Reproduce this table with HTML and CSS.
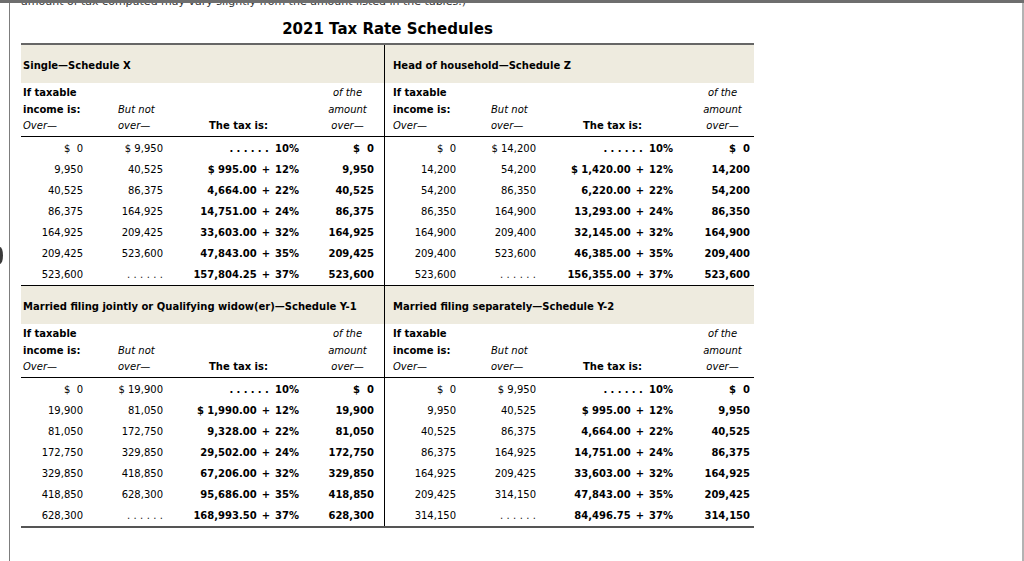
FILE: index.html
```html
<!DOCTYPE html>
<html lang="en">
<head>
<meta charset="utf-8">
<title>2021 Tax Rate Schedules</title>
<link rel="stylesheet" href="styles.css">
</head>
<body>
<div class="topbar"></div>
<div class="main">
  <div class="gutter"><div class="paren"></div></div>
  <div class="frame">
    <div class="cut"><p>amount of tax computed may vary slightly from the amount listed in the tables.)</p></div>
    <div class="content">
      <h1 class="title">2021 Tax Rate Schedules</h1>
      <div class="schedules">

        <section class="panel left upper">
          <div class="band">Single—Schedule X</div>
          <div class="colhead">
            <span class="c1 b">If taxable</span><span class="c2"></span><span class="c3"></span><span class="c4 i">of the</span>
            <span class="c1 b">income is:</span><span class="c2 i">But not</span><span class="c3"></span><span class="c4 i">amount</span>
            <span class="c1 i">Over—</span><span class="c2 i">over—</span><span class="c3 b">The tax is:</span><span class="c4 i">over—</span>
          </div>
          <div class="rows">
            <span>$&nbsp;&nbsp;0</span><span>$ 9,950</span><span class="tax"><span class="lead">......</span>10%</span><span class="ov">$&nbsp;&nbsp;0</span>
            <span>9,950</span><span>40,525</span><span class="tax">$ 995.00<span class="op">+</span>12%</span><span class="ov">9,950</span>
            <span>40,525</span><span>86,375</span><span class="tax">4,664.00<span class="op">+</span>22%</span><span class="ov">40,525</span>
            <span>86,375</span><span>164,925</span><span class="tax">14,751.00<span class="op">+</span>24%</span><span class="ov">86,375</span>
            <span>164,925</span><span>209,425</span><span class="tax">33,603.00<span class="op">+</span>32%</span><span class="ov">164,925</span>
            <span>209,425</span><span>523,600</span><span class="tax">47,843.00<span class="op">+</span>35%</span><span class="ov">209,425</span>
            <span>523,600</span><span><span class="dots">......</span></span><span class="tax">157,804.25<span class="op">+</span>37%</span><span class="ov">523,600</span>
          </div>
        </section>

        <section class="panel right upper">
          <div class="band">Head of household—Schedule Z</div>
          <div class="colhead">
            <span class="c1 b">If taxable</span><span class="c2"></span><span class="c3"></span><span class="c4 i">of the</span>
            <span class="c1 b">income is:</span><span class="c2 i">But not</span><span class="c3"></span><span class="c4 i">amount</span>
            <span class="c1 i">Over—</span><span class="c2 i">over—</span><span class="c3 b">The tax is:</span><span class="c4 i">over—</span>
          </div>
          <div class="rows">
            <span>$&nbsp;&nbsp;0</span><span>$ 14,200</span><span class="tax"><span class="lead">......</span>10%</span><span class="ov">$&nbsp;&nbsp;0</span>
            <span>14,200</span><span>54,200</span><span class="tax">$ 1,420.00<span class="op">+</span>12%</span><span class="ov">14,200</span>
            <span>54,200</span><span>86,350</span><span class="tax">6,220.00<span class="op">+</span>22%</span><span class="ov">54,200</span>
            <span>86,350</span><span>164,900</span><span class="tax">13,293.00<span class="op">+</span>24%</span><span class="ov">86,350</span>
            <span>164,900</span><span>209,400</span><span class="tax">32,145.00<span class="op">+</span>32%</span><span class="ov">164,900</span>
            <span>209,400</span><span>523,600</span><span class="tax">46,385.00<span class="op">+</span>35%</span><span class="ov">209,400</span>
            <span>523,600</span><span><span class="dots">......</span></span><span class="tax">156,355.00<span class="op">+</span>37%</span><span class="ov">523,600</span>
          </div>
        </section>

        <section class="panel left">
          <div class="band">Married filing jointly or Qualifying widow(er)—Schedule Y-1</div>
          <div class="colhead">
            <span class="c1 b">If taxable</span><span class="c2"></span><span class="c3"></span><span class="c4 i">of the</span>
            <span class="c1 b">income is:</span><span class="c2 i">But not</span><span class="c3"></span><span class="c4 i">amount</span>
            <span class="c1 i">Over—</span><span class="c2 i">over—</span><span class="c3 b">The tax is:</span><span class="c4 i">over—</span>
          </div>
          <div class="rows">
            <span>$&nbsp;&nbsp;0</span><span>$ 19,900</span><span class="tax"><span class="lead">......</span>10%</span><span class="ov">$&nbsp;&nbsp;0</span>
            <span>19,900</span><span>81,050</span><span class="tax">$ 1,990.00<span class="op">+</span>12%</span><span class="ov">19,900</span>
            <span>81,050</span><span>172,750</span><span class="tax">9,328.00<span class="op">+</span>22%</span><span class="ov">81,050</span>
            <span>172,750</span><span>329,850</span><span class="tax">29,502.00<span class="op">+</span>24%</span><span class="ov">172,750</span>
            <span>329,850</span><span>418,850</span><span class="tax">67,206.00<span class="op">+</span>32%</span><span class="ov">329,850</span>
            <span>418,850</span><span>628,300</span><span class="tax">95,686.00<span class="op">+</span>35%</span><span class="ov">418,850</span>
            <span>628,300</span><span><span class="dots">......</span></span><span class="tax">168,993.50<span class="op">+</span>37%</span><span class="ov">628,300</span>
          </div>
        </section>

        <section class="panel right">
          <div class="band">Married filing separately—Schedule Y-2</div>
          <div class="colhead">
            <span class="c1 b">If taxable</span><span class="c2"></span><span class="c3"></span><span class="c4 i">of the</span>
            <span class="c1 b">income is:</span><span class="c2 i">But not</span><span class="c3"></span><span class="c4 i">amount</span>
            <span class="c1 i">Over—</span><span class="c2 i">over—</span><span class="c3 b">The tax is:</span><span class="c4 i">over—</span>
          </div>
          <div class="rows">
            <span>$&nbsp;&nbsp;0</span><span>$ 9,950</span><span class="tax"><span class="lead">......</span>10%</span><span class="ov">$&nbsp;&nbsp;0</span>
            <span>9,950</span><span>40,525</span><span class="tax">$ 995.00<span class="op">+</span>12%</span><span class="ov">9,950</span>
            <span>40,525</span><span>86,375</span><span class="tax">4,664.00<span class="op">+</span>22%</span><span class="ov">40,525</span>
            <span>86,375</span><span>164,925</span><span class="tax">14,751.00<span class="op">+</span>24%</span><span class="ov">86,375</span>
            <span>164,925</span><span>209,425</span><span class="tax">33,603.00<span class="op">+</span>32%</span><span class="ov">164,925</span>
            <span>209,425</span><span>314,150</span><span class="tax">47,843.00<span class="op">+</span>35%</span><span class="ov">209,425</span>
            <span>314,150</span><span><span class="dots">......</span></span><span class="tax">84,496.75<span class="op">+</span>37%</span><span class="ov">314,150</span>
          </div>
        </section>

      </div>
    </div>
  </div>
</div>
</body>
</html>
```
FILE: styles.css
```css
html, body {
  margin: 0;
  padding: 0;
  background: #fff;
}

body {
  height: 561px;
  overflow: hidden;
  display: flex;
  flex-direction: column;
  font-family: "DejaVu Sans", Verdana, sans-serif;
  font-size: 10px;
  color: #000;
}

.topbar {
  height: 3px;
  flex: none;
  background: #6e6e6e;
}

.main {
  flex: 1;
  display: flex;
  min-height: 0;
}

.gutter {
  width: 9px;
  flex: none;
  overflow: hidden;
}

.paren {
  width: 6px;
  height: 17px;
  margin: 244px 0 0 -3px;
  border-radius: 50%;
  background: #3a3a3a;
}

.frame {
  flex: 1;
  border-left: 1px solid #7d7d7d;
  border-right: 2px solid #b3b3b3;
  padding-left: 11px;
}

.cut {
  height: 4px;
  overflow: hidden;
}

.cut p {
  margin: -8px 0 0;
  font-size: 11px;
  line-height: 14px;
  color: #333;
  white-space: nowrap;
}

.content {
  width: 733px;
}

.title {
  margin: 12px 0 0;
  font-size: 15px;
  line-height: 20px;
  font-weight: bold;
  text-align: center;
}

.schedules {
  margin-top: 4px;
  display: grid;
  grid-template-columns: 364px 369px;
  border-top: 2px solid #666;
  border-bottom: 2px solid #555;
}

.panel {
  display: flex;
  flex-direction: column;
}

.panel.left {
  border-right: 1px solid #000;
  --pl: 2px;
  --pr: 10px;
  --cols: 60px 80px 136px 75px;
}

.panel.right {
  --pl: 8px;
  --pr: 4px;
  --cols: 63px 80px 137px 77px;
}

.band {
  background: #eeebdf;
  padding: 3px var(--pr) 0 var(--pl);
  line-height: 35px;
  font-weight: bold;
  white-space: nowrap;
}

.colhead {
  display: grid;
  grid-template-columns: var(--cols);
  grid-auto-rows: 16.5px;
  padding: 2px var(--pr) 1.5px var(--pl);
  border-bottom: 1px solid #000;
  line-height: 16.5px;
  white-space: nowrap;
}

.colhead .b { font-weight: bold; }
.colhead .i { font-style: italic; }

.colhead .c2 { padding-left: 35px; }
.colhead .c3 { text-align: right; padding-right: 31px; }
.colhead .c4 { text-align: center; padding-left: 22px; }

.rows {
  display: grid;
  grid-template-columns: var(--cols);
  grid-auto-rows: 21px;
  padding: 1px var(--pr) 0 var(--pl);
  line-height: 21px;
  white-space: nowrap;
}

.panel.upper .rows {
  border-bottom: 1px solid #000;
}

.rows > span {
  text-align: right;
}

.rows .tax,
.rows .ov {
  font-weight: bold;
}

.op {
  margin: 0 5px;
}

.lead {
  letter-spacing: 3.3px;
  margin-right: 3px;
}

.dots {
  letter-spacing: 3.4px;
  margin-right: -3.4px;
  color: #222;
}
```
